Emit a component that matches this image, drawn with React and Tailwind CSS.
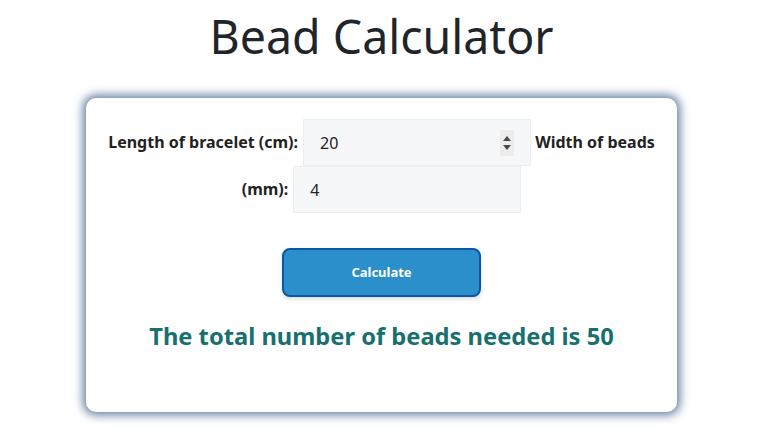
import React from "react";

function Spinner() {
  return (
    <span className="flex flex-col items-center justify-center w-[14px] h-[26px] bg-[#ececec] mr-[16px] gap-[4px]">
      <svg width="8" height="5" viewBox="0 0 8 5"><path d="M0 5 L4 0 L8 5 Z" fill="#4a4a4a" /></svg>
      <svg width="8" height="5" viewBox="0 0 8 5"><path d="M0 0 L4 5 L8 0 Z" fill="#4a4a4a" /></svg>
    </span>
  );
}

export default function App() {
  return (
    <div className="min-h-[437px] bg-white font-['Noto_Sans',sans-serif] text-[#212529]">
      <h1 className="text-center text-[46.5px] leading-[72px] font-normal text-[#212529]">Bead Calculator</h1>
      <div className="mx-[86px] mt-[26px] h-[314px] rounded-[10px] bg-white shadow-[0_0_10px_3px_rgba(60,95,140,0.8)] px-[20px] pt-[21px]">
        <div className="text-center text-[16px] leading-[47px] font-bold text-[#222]">
          <label className="mr-[5px]">Length of bracelet (cm):</label>
          <span className="inline-flex align-top items-center w-[228px] h-[47px] bg-[#f6f7f9] border border-[#eceef1]">
            <input className="flex-1 min-w-0 h-full bg-transparent pl-[16px] outline-none font-normal text-[16px] text-[#222]" defaultValue="20" />
            <Spinner />
          </span>{" "}
          <label className="mr-[5px]">Width of beads (mm):</label>
          <span className="inline-flex align-top items-center w-[228px] h-[47px] bg-[#f6f7f9] border border-[#eceef1]">
            <input className="flex-1 min-w-0 h-full bg-transparent pl-[16px] outline-none font-normal text-[16px] text-[#222]" defaultValue="4" />
          </span>
        </div>
        <div className="flex justify-center mt-[35px]">
          <button className="w-[199px] h-[49px] rounded-[8px] bg-[#2a8fcb] border-2 border-[#0b57a4] text-white text-[13px] font-bold shadow-[0_2px_4px_rgba(0,0,0,0.15)]">Calculate</button>
        </div>
        <p className="text-center mt-[22px] text-[23.7px] font-bold text-[#17706e]">The total number of beads needed is 50</p>
      </div>
    </div>
  );
}
